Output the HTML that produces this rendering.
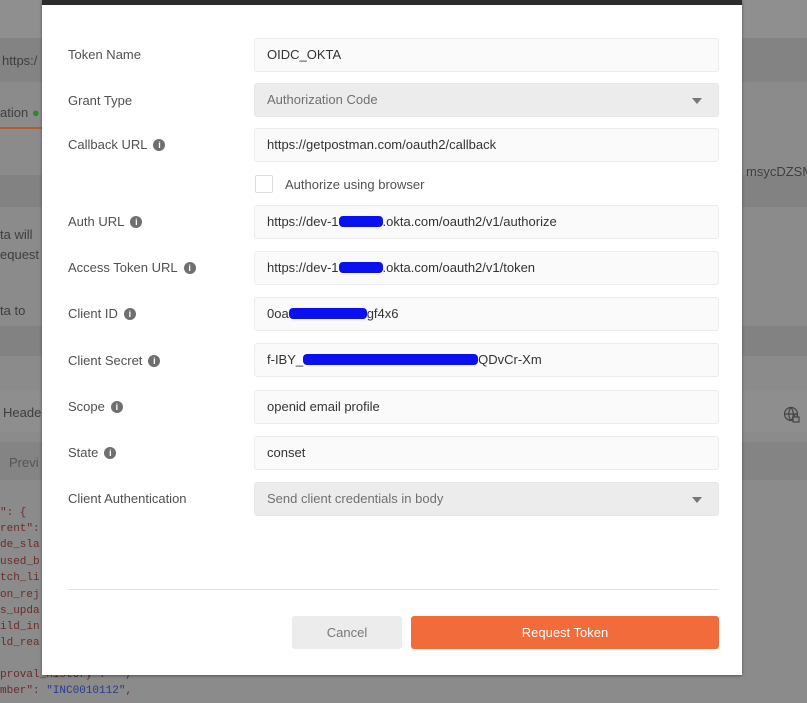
<!DOCTYPE html>
<html><head><style>
*{margin:0;padding:0;box-sizing:border-box}
body{width:807px;height:703px;background:#8b8b8b;position:relative;overflow:hidden;font-family:"Liberation Sans",sans-serif;font-size:13px}
.bg{position:absolute;color:#3e3e3e;font-size:13px}
.strip{position:absolute;left:0;width:807px}
.modal{position:absolute;left:42px;top:0;width:700px;height:675px;background:#fff;border-top:5px solid #2c2c2c;box-shadow:0 1px 3px rgba(0,0,0,.4)}
.lbl{position:absolute;left:26px;color:#505050;font-size:13px;display:flex;align-items:center}
.i{display:inline-block;width:12px;height:12px;border-radius:50%;background:#6f6f6f;color:#fff;font-size:9px;font-weight:bold;text-align:center;line-height:12px;margin-left:6px}
.f{position:absolute;left:212px;width:465px;height:34px;border:1px solid #ececec;background:#fafafa;border-radius:3px;color:#333;padding-left:12px;line-height:32px;font-size:13px}
.sel{background:#ececec;border-color:#e6e6e6;color:#707070}
.sel:after{content:"";position:absolute;right:16px;top:14px;border-left:5px solid transparent;border-right:5px solid transparent;border-top:6px solid #777}
.red{display:inline-block;background:#0a10f0;height:11px;vertical-align:-1px;border-radius:4px}
.code{position:absolute;left:0;font-family:"Liberation Mono",monospace;font-size:11px;color:#6b2b2b}
</style></head><body>
<div class="strip" style="top:0;height:38px;background:#8f8f8f"></div>
<div class="strip" style="top:38px;height:44px;background:#838383"></div>
<div class="bg" style="left:2px;top:53px">https:/</div>
<div class="bg" style="left:0;top:105px">ation <span style="color:#2a8a2a">●</span></div>
<div class="strip" style="top:127px;height:2px;background:#b05a30;width:42px"></div>
<div class="strip" style="top:175px;height:32px;background:#828282"></div>
<div class="bg" style="left:0;top:227px">ta will</div>
<div class="bg" style="left:0;top:247px">equest</div>
<div class="bg" style="left:0;top:303px">ta to</div>
<div class="strip" style="top:326px;height:30px;background:#828282"></div>
<div class="bg" style="left:746px;top:164px">msycDZSM</div>
<div class="strip" style="top:390px;height:42px;background:#8e8e8e"></div>
<div class="bg" style="left:3px;top:405px">Heade</div>
<div class="strip" style="top:442px;height:38px;background:#848484"></div>
<div class="bg" style="left:9px;top:455px;color:#555">Previ</div>
<svg style="position:absolute;left:783px;top:406px" width="18" height="18" viewBox="0 0 18 18" fill="none" stroke="#444" stroke-width="1.2"><circle cx="8" cy="8" r="6.5"/><path d="M1.5 8h13M8 1.5c-3 3.5-3 9.5 0 13M8 1.5c3 3.5 3 9.5 0 13"/><rect x="10" y="11" width="6" height="5" fill="#8e8e8e"/><path d="M11.5 11v-1.5a1.5 1.5 0 013 0V11"/></svg>
<div class="code" style="top:507px">":&nbsp;{</div>
<div class="code" style="top:523px">rent":</div>
<div class="code" style="top:539px">de_sla</div>
<div class="code" style="top:556px">used_b</div>
<div class="code" style="top:572px">tch_li</div>
<div class="code" style="top:589px">on_rej</div>
<div class="code" style="top:605px">s_upda</div>
<div class="code" style="top:621px">ild_in</div>
<div class="code" style="top:637px">ld_rea</div>
<div class="code" style="top:669px">proval_history": "",</div>
<div class="code" style="top:685px">mber": <span style="color:#2b3a8a">"INC0010112"</span>,</div>

<div class="modal">
<div class="lbl" style="top:42px">Token Name</div>
<div class="f" style="top:33px">OIDC_OKTA</div>
<div class="lbl" style="top:88px">Grant Type</div>
<div class="f sel" style="top:78px">Authorization Code</div>
<div class="lbl" style="top:132px">Callback URL<span class="i">i</span></div>
<div class="f" style="top:123px">https://getpostman.com/oauth2/callback</div>
<div style="position:absolute;left:213px;top:170px;width:18px;height:18px;border:1px solid #ddd;border-radius:2px;background:#fff"></div>
<div style="position:absolute;left:243px;top:172px;color:#505050">Authorize using browser</div>
<div class="lbl" style="top:209px">Auth URL<span class="i">i</span></div>
<div class="f" style="top:200px">https://dev-1<span class="red" style="width:44px"></span>.okta.com/oauth2/v1/authorize</div>
<div class="lbl" style="top:255px">Access Token URL<span class="i">i</span></div>
<div class="f" style="top:246px">https://dev-1<span class="red" style="width:44px"></span>.okta.com/oauth2/v1/token</div>
<div class="lbl" style="top:301px">Client ID<span class="i">i</span></div>
<div class="f" style="top:292px">0oa<span class="red" style="width:78px"></span>gf4x6</div>
<div class="lbl" style="top:348px">Client Secret<span class="i">i</span></div>
<div class="f" style="top:338px">f-IBY_<span class="red" style="width:175px"></span>QDvCr-Xm</div>
<div class="lbl" style="top:394px">Scope<span class="i">i</span></div>
<div class="f" style="top:385px">openid email profile</div>
<div class="lbl" style="top:440px">State<span class="i">i</span></div>
<div class="f" style="top:431px">conset</div>
<div class="lbl" style="top:486px">Client Authentication</div>
<div class="f sel" style="top:477px">Send client credentials in body</div>
<div style="position:absolute;left:26px;top:584px;width:651px;height:1px;background:#e2e2e2"></div>
<div style="position:absolute;left:250px;top:611px;width:110px;height:33px;background:#ececec;border-radius:3px;color:#777;text-align:center;line-height:33px">Cancel</div>
<div style="position:absolute;left:369px;top:611px;width:308px;height:33px;background:#f26b3a;border-radius:3px;color:#fff;text-align:center;line-height:33px">Request Token</div>
</div>
</body></html>
